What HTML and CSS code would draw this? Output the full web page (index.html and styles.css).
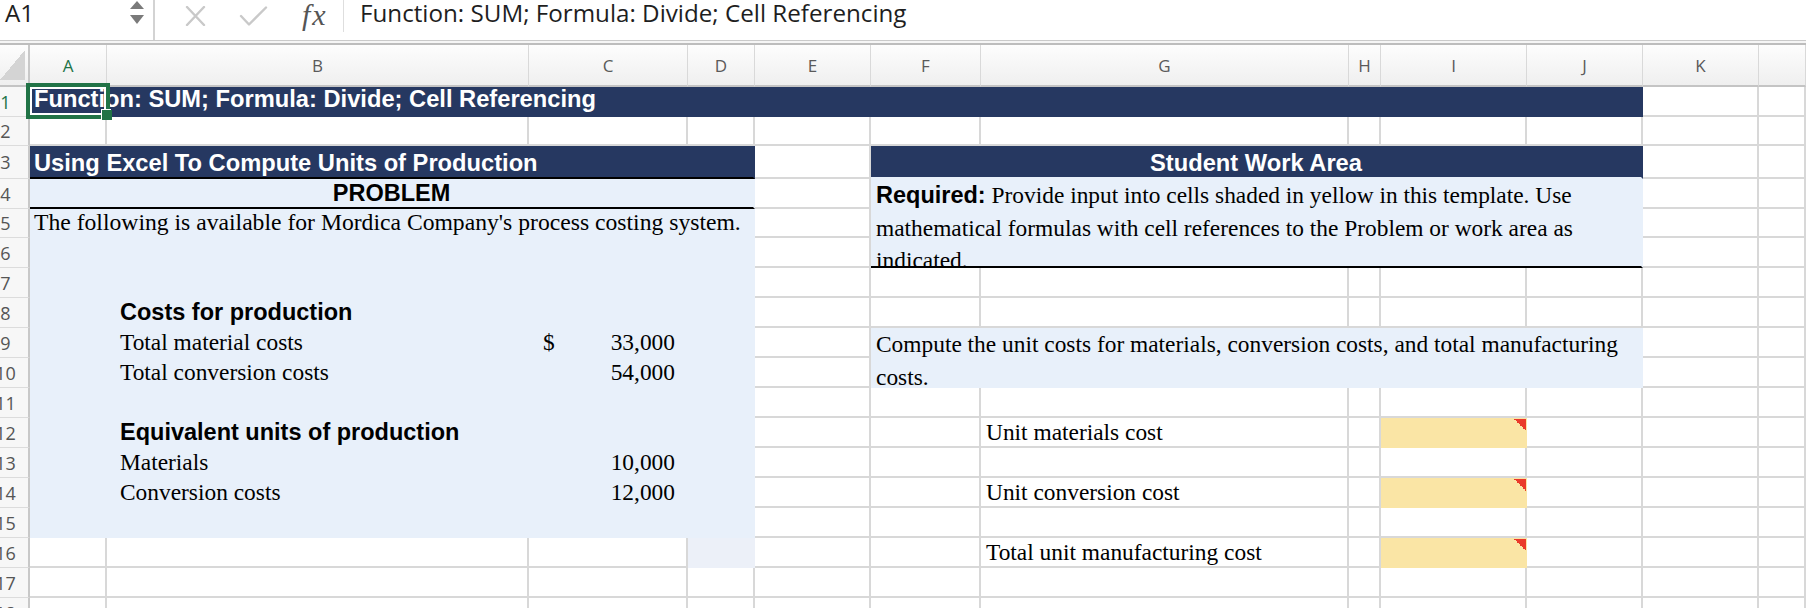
FILE: index.html
```html
<!DOCTYPE html>
<html lang="en">
<head>
<meta charset="utf-8">
<title>Sheet</title>
<link rel="stylesheet" href="styles.css">
</head>
<body>
<div class="app">
  <div class="fbar">
    <div class="namebox">
      <span class="nb-text">A1</span>
      <svg class="nb-arrows" viewBox="0 0 14 26" width="14" height="26"><polygon points="7,1 14,9 0,9" fill="#7a7a7a"/><polygon points="0,15 14,15 7,24" fill="#7a7a7a"/></svg>
    </div>
    <div class="vsep"></div>
    <svg class="ico-x" viewBox="0 0 23 20" width="23" height="20"><path d="M3 1 L20 19 M20 1 L3 19" stroke="#c9c9c9" stroke-width="2.4" fill="none" stroke-linecap="round"/></svg>
    <svg class="ico-ok" viewBox="0 0 29 20" width="29" height="20"><path d="M2 10 L10 18.5 L27 1.5" stroke="#c9c9c9" stroke-width="2.4" fill="none" stroke-linecap="round" stroke-linejoin="round"/></svg>
    <span class="fx">fx</span>
    <div class="vsep2"></div>
    <div class="ftext">Function: SUM; Formula: Divide; Cell Referencing</div>
  </div>
  <div class="fbar-sep"></div>

  <div class="sheet">
    <!-- header -->
    <div class="corner"><div class="tri"></div></div>
    <div class="h act">A</div><div class="h">B</div><div class="h">C</div><div class="h">D</div><div class="h">E</div><div class="h">F</div><div class="h">G</div><div class="h">H</div><div class="h">I</div><div class="h">J</div><div class="h">K</div><div class="h"></div>

    <!-- row 1 -->
    <div class="rh act"><span>1</span></div>
    <div class="c nv s10 t1"><span>Function: SUM; Formula: Divide; Cell Referencing</span><div class="selbox"></div><div class="handle"></div></div>
    <div class="c"></div><div class="c"></div>

    <!-- row 2 -->
    <div class="rh"><span>2</span></div>
    <div class="c"></div><div class="c"></div><div class="c"></div><div class="c"></div><div class="c"></div><div class="c"></div><div class="c"></div><div class="c"></div><div class="c"></div><div class="c"></div><div class="c"></div><div class="c"></div>

    <!-- row 3 -->
    <div class="rh"><span>3</span></div>
    <div class="c nv s4 bk pa">Using Excel To Compute Units of Production</div>
    <div class="c"></div>
    <div class="c nv s5 nvb ctr">Student Work Area</div>
    <div class="c"></div><div class="c"></div>

    <!-- row 4 -->
    <div class="rh"><span>4</span></div>
    <div class="c bl s4 bk ctr arb">PROBLEM</div>
    <div class="c"></div>
    <div class="c bl s5 r3 bk wrap"><div class="wtext"><b class="arb">Required:</b> Provide input into cells shaded in yellow in this template. Use<br>mathematical formulas with cell references to the Problem or work area as<br>indicated.</div></div>
    <div class="c"></div><div class="c"></div>

    <!-- row 5 -->
    <div class="rh"><span>5</span></div>
    <div class="c bl s4 pa wide">The following is available for Mordica Company's process costing system.</div>
    <div class="c"></div><div class="c"></div><div class="c"></div>

    <!-- row 6 -->
    <div class="rh"><span>6</span></div>
    <div class="c bl s4"></div>
    <div class="c"></div><div class="c"></div><div class="c"></div>

    <!-- row 7 -->
    <div class="rh"><span>7</span></div>
    <div class="c bl s4"></div>
    <div class="c"></div><div class="c"></div><div class="c"></div><div class="c"></div><div class="c"></div><div class="c"></div><div class="c"></div><div class="c"></div>

    <!-- row 8 -->
    <div class="rh"><span>8</span></div>
    <div class="c bl"></div><div class="c bl pb arb">Costs for production</div><div class="c bl"></div><div class="c bl"></div>
    <div class="c"></div><div class="c"></div><div class="c"></div><div class="c"></div><div class="c"></div><div class="c"></div><div class="c"></div><div class="c"></div>

    <!-- row 9 -->
    <div class="rh"><span>9</span></div>
    <div class="c bl"></div><div class="c bl pb">Total material costs</div><div class="c bl num"><span>$</span><span>33,000</span></div><div class="c bl"></div>
    <div class="c"></div>
    <div class="c bl s5 r2 wrap"><div class="wtext">Compute the unit costs for materials, conversion costs, and total manufacturing<br>costs.</div></div>
    <div class="c"></div><div class="c"></div>

    <!-- row 10 -->
    <div class="rh"><span>10</span></div>
    <div class="c bl"></div><div class="c bl pb">Total conversion costs</div><div class="c bl num"><span></span><span>54,000</span></div><div class="c bl"></div>
    <div class="c"></div><div class="c"></div><div class="c"></div>

    <!-- row 11 -->
    <div class="rh"><span>11</span></div>
    <div class="c bl s4"></div>
    <div class="c"></div><div class="c"></div><div class="c"></div><div class="c"></div><div class="c"></div><div class="c"></div><div class="c"></div><div class="c"></div>

    <!-- row 12 -->
    <div class="rh"><span>12</span></div>
    <div class="c bl"></div><div class="c bl pb arb">Equivalent units of production</div><div class="c bl"></div><div class="c bl"></div>
    <div class="c"></div><div class="c"></div><div class="c pg">Unit materials cost</div><div class="c"></div><div class="c yl"></div><div class="c"></div><div class="c"></div><div class="c"></div>

    <!-- row 13 -->
    <div class="rh"><span>13</span></div>
    <div class="c bl"></div><div class="c bl pb">Materials</div><div class="c bl num"><span></span><span>10,000</span></div><div class="c bl"></div>
    <div class="c"></div><div class="c"></div><div class="c"></div><div class="c"></div><div class="c"></div><div class="c"></div><div class="c"></div><div class="c"></div>

    <!-- row 14 -->
    <div class="rh"><span>14</span></div>
    <div class="c bl"></div><div class="c bl pb">Conversion costs</div><div class="c bl num"><span></span><span>12,000</span></div><div class="c bl"></div>
    <div class="c"></div><div class="c"></div><div class="c pg">Unit conversion cost</div><div class="c"></div><div class="c yl"></div><div class="c"></div><div class="c"></div><div class="c"></div>

    <!-- row 15 -->
    <div class="rh"><span>15</span></div>
    <div class="c bl s4"></div>
    <div class="c"></div><div class="c"></div><div class="c"></div><div class="c"></div><div class="c"></div><div class="c"></div><div class="c"></div><div class="c"></div>

    <!-- row 16 -->
    <div class="rh"><span>16</span></div>
    <div class="c"></div><div class="c"></div><div class="c"></div><div class="c bl2"></div>
    <div class="c"></div><div class="c"></div><div class="c pg">Total unit manufacturing cost</div><div class="c"></div><div class="c yl"></div><div class="c"></div><div class="c"></div><div class="c"></div>

    <!-- row 17 -->
    <div class="rh"><span>17</span></div>
    <div class="c"></div><div class="c"></div><div class="c"></div><div class="c"></div><div class="c"></div><div class="c"></div><div class="c"></div><div class="c"></div><div class="c"></div><div class="c"></div><div class="c"></div><div class="c"></div>

    <!-- row 18 -->
    <div class="rh"><span>18</span></div>
    <div class="c"></div><div class="c"></div><div class="c"></div><div class="c"></div><div class="c"></div><div class="c"></div><div class="c"></div><div class="c"></div><div class="c"></div><div class="c"></div><div class="c"></div><div class="c"></div>
  </div>
</div>
</body>
</html>
```
FILE: styles.css
```css
:root {
  --grid: #d8d8d8;
  --navy: #263861;
  --blue: #e8f0fa;
  --green: #217346;
}
html, body {
  margin: 0;
  padding: 0;
  background: #fff;
  width: 1806px;
  height: 608px;
  overflow: hidden;
}
.app {
  width: 1806px;
  height: 608px;
  overflow: hidden;
}

/* formula bar */
.fbar {
  height: 40px;
  display: flex;
  align-items: flex-start;
  font-family: "Open Sans", "Liberation Sans", sans-serif;
  font-size: 24.2px;
  line-height: 28px;
  color: #1e1e1e;
}
.namebox {
  width: 153px;
  box-sizing: border-box;
  padding-left: 5px;
  display: flex;
  align-items: flex-start;
}
.nb-text { margin-top: -1px; }
.nb-arrows {
  margin-left: auto;
  margin-right: 9px;
}
.vsep {
  width: 2px;
  height: 40px;
  background: #d3d3d3;
}
.ico-x {
  margin-left: 29px;
  margin-top: 6px;
}
.ico-ok {
  margin-left: 32px;
  margin-top: 6px;
}
.fx {
  margin-left: 34px;
  width: 30px;
  font-family: "Liberation Serif", serif;
  font-style: italic;
  font-size: 30px;
  line-height: 30px;
  letter-spacing: 2px;
  color: #555;
}
.vsep2 {
  margin-left: 11px;
  width: 1px;
  height: 32px;
  background: #dedede;
}
.ftext {
  margin-left: 16px;
  margin-top: -1px;
  white-space: nowrap;
}
.fbar-sep {
  height: 5px;
  box-sizing: border-box;
  border-top: 1px solid #cacaca;
  border-bottom: 2px solid #bdbdbd;
  background: #f5f5f5;
}

/* sheet grid */
.sheet {
  display: grid;
  grid-template-columns: 30px 77px 422px 159px 67px 116px 110px 368px 32px 146px 116px 116px 1fr;
  grid-template-rows: 42px 30px 29px 33px 30px 29px repeat(13, 30px);
}

.corner {
  box-sizing: border-box;
  background: linear-gradient(#fdfdfd, #efefef);
  border-right: 2px solid #c8c8c8;
  border-bottom: 2px solid #c4c4c4;
  display: flex;
  align-items: flex-end;
  justify-content: flex-end;
}
.tri {
  width: 25px;
  height: 30px;
  margin: 0 3px 5px 0;
  background: linear-gradient(to top left, #d4d4d4 50%, transparent 50%);
}
.h {
  box-sizing: border-box;
  background: linear-gradient(#fdfdfd, #efefef);
  border-right: 1px solid #d9d9d9;
  border-bottom: 2px solid #c4c4c4;
  display: flex;
  align-items: center;
  justify-content: center;
  font-family: "Open Sans", "Liberation Sans", sans-serif;
  font-size: 17px;
  color: #5a5a5a;
}
.h.act { color: var(--green); }

.rh {
  box-sizing: border-box;
  background: #f7f7f7;
  border-right: 2px solid #c8c8c8;
  border-bottom: 1px solid #dcdcdc;
  overflow: hidden;
  display: flex;
  align-items: center;
  font-family: "Open Sans", "Liberation Sans", sans-serif;
  font-size: 18px;
  color: #555;
}
.rh span {
  flex: none;
  width: 45px;
  margin-left: -17px;
  text-align: center;
}
.rh.act { color: var(--green); }

.c {
  box-sizing: border-box;
  min-width: 0;
  border-right: 2px solid var(--grid);
  border-bottom: 2px solid var(--grid);
  display: flex;
  align-items: flex-end;
  white-space: nowrap;
  font-family: "Liberation Serif", "Times New Roman", serif;
  font-size: 23.4px;
  color: #000;
}
.s4 { grid-column: span 4; }
.s5 { grid-column: span 5; }
.s10 { grid-column: span 10; }
.r2 { grid-row: span 2; }
.r3 { grid-row: span 3; }

.nv {
  background: var(--navy);
  border-color: transparent;
  color: #fff;
  font-family: "Liberation Sans", Arial, sans-serif;
  font-weight: 700;
  font-size: 23.7px;
}
.bl {
  background-color: var(--blue);
  border-color: transparent;
}
.bl2 {
  background-color: #ecf0f8;
  border-color: transparent;
}
.bk { border-bottom-color: #000; }
.nvb { border-bottom-color: var(--blue); }
.arb {
  font-family: "Liberation Sans", Arial, sans-serif;
  font-weight: 700;
  font-size: 23.5px;
}
.wide { font-size: 23.65px; }
.ctr { justify-content: center; }
.pa { padding-left: 4px; }
.pb { padding-left: 13px; }
.pg { padding-left: 5px; }

.t1 {
  position: relative;
  padding-left: 4px;
  padding-bottom: 2px;
}
.selbox {
  position: absolute;
  left: -4px;
  top: -4px;
  width: 84px;
  height: 36px;
  box-sizing: border-box;
  border: 4px solid var(--green);
  box-shadow: inset 0 0 0 2px #fff;
}
.handle {
  position: absolute;
  left: 72px;
  top: 23px;
  width: 10px;
  height: 10px;
  background: var(--green);
  box-shadow: -1px -1px 0 #fff;
}

.num {
  justify-content: space-between;
  padding: 0 11px 0 14px;
}

.wrap {
  align-items: flex-start;
  padding-left: 5px;
  line-height: 32.5px;
}
.wtext { white-space: nowrap; }

.yl {
  background-color: #fae5a5;
  border-color: transparent;
  background-image: linear-gradient(to bottom left, #ea3a2a 50%, transparent 50%);
  background-size: 12px 12px;
  background-origin: border-box;
  background-position: right 1px top 1px;
  background-repeat: no-repeat;
}
```
